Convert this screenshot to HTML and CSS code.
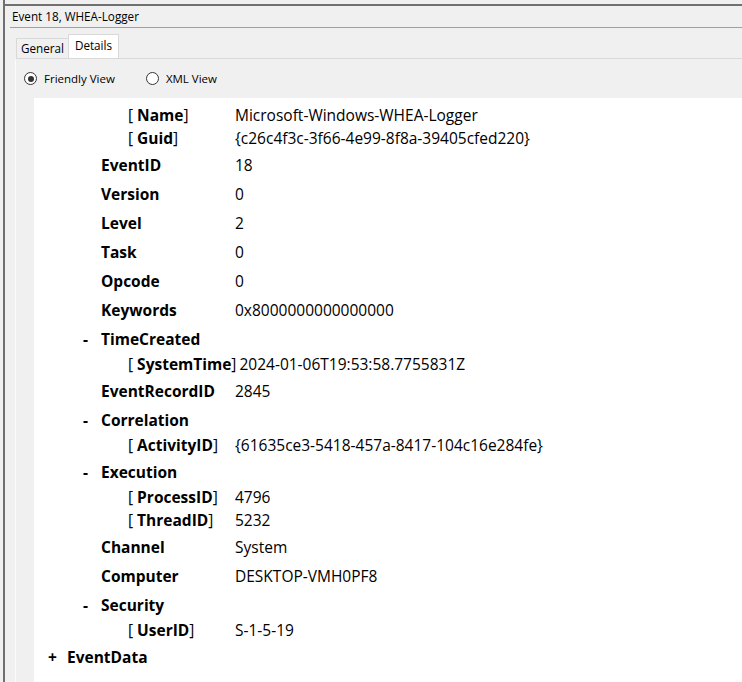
FILE: index.html
```html
<!DOCTYPE html>
<html lang="en">
<head>
    <meta charset="UTF-8">
    <title>Event 18, WHEA-Logger</title>
    <link rel="stylesheet" href="styles.css">
</head>
<body>
    <div class="window">
        <div class="frame">
            <div class="title">Event 18, WHEA-Logger</div>
            <div class="tabs">
                <div class="tab">General</div>
                <div class="tab active">Details</div>
            </div>
            <div class="panel">
                <div class="views">
                    <label class="radio"><span class="dot checked"></span>Friendly View</label>
                    <label class="radio"><span class="dot"></span>XML View</label>
                </div>
                <div class="details">
                    <div class="row sub"><span class="key">[ <b>Name</b>]</span><span class="val">Microsoft-Windows-WHEA-Logger</span></div>
                    <div class="row sub"><span class="key">[ <b>Guid</b>]</span><span class="val">{c26c4f3c-3f66-4e99-8f8a-39405cfed220}</span></div>
                    <div class="row main"><span class="tog"></span><b class="key">EventID</b><span class="val">18</span></div>
                    <div class="row main"><span class="tog"></span><b class="key">Version</b><span class="val">0</span></div>
                    <div class="row main"><span class="tog"></span><b class="key">Level</b><span class="val">2</span></div>
                    <div class="row main"><span class="tog"></span><b class="key">Task</b><span class="val">0</span></div>
                    <div class="row main"><span class="tog"></span><b class="key">Opcode</b><span class="val">0</span></div>
                    <div class="row main"><span class="tog"></span><b class="key">Keywords</b><span class="val">0x8000000000000000</span></div>
                    <div class="row main"><span class="tog">-</span><b class="key">TimeCreated</b></div>
                    <div class="row sub"><span class="key">[ <b>SystemTime</b>]</span><span class="val">2024-01-06T19:53:58.7755831Z</span></div>
                    <div class="row main"><span class="tog"></span><b class="key">EventRecordID</b><span class="val">2845</span></div>
                    <div class="row main"><span class="tog">-</span><b class="key">Correlation</b></div>
                    <div class="row sub"><span class="key">[ <b>ActivityID</b>]</span><span class="val">{61635ce3-5418-457a-8417-104c16e284fe}</span></div>
                    <div class="row main"><span class="tog">-</span><b class="key">Execution</b></div>
                    <div class="row sub"><span class="key">[ <b>ProcessID</b>]</span><span class="val">4796</span></div>
                    <div class="row sub"><span class="key">[ <b>ThreadID</b>]</span><span class="val">5232</span></div>
                    <div class="row main"><span class="tog"></span><b class="key">Channel</b><span class="val">System</span></div>
                    <div class="row main"><span class="tog"></span><b class="key">Computer</b><span class="val">DESKTOP-VMH0PF8</span></div>
                    <div class="row main"><span class="tog">-</span><b class="key">Security</b></div>
                    <div class="row sub"><span class="key">[ <b>UserID</b>]</span><span class="val">S-1-5-19</span></div>
                    <div class="row top"><span class="tog">+</span><b class="key">EventData</b></div>
                </div>
            </div>
        </div>
    </div>
</body>
</html>
```

FILE: styles.css
```css
html, body {
    margin: 0;
    height: 100%;
    overflow: hidden;
}

body {
    background: #f0f0f0;
    font-family: "Open Sans", "Noto Sans", sans-serif;
    color: #000;
}

.window {
    margin-left: 3px;
    height: 682px;
    border-left: 2px solid #707070;
    padding-top: 4px;
    box-sizing: border-box;
}

.frame {
    border-top: 2px solid #707070;
    height: 100%;
    display: flex;
    flex-direction: column;
}

.title {
    margin-left: 5px;
    padding-left: 2px;
    height: 21px;
    line-height: 20px;
    font-size: 11.7px;
    border-bottom: 1px solid #a0a0a0;
}

.tabs {
    display: flex;
    align-items: flex-end;
    height: 30px;
    margin-left: 11px;
}

.tab {
    width: 51px;
    height: 19px;
    line-height: 19px;
    font-size: 11.7px;
    text-align: center;
    border: 1px solid #d9d9d9;
    border-bottom: none;
    border-right: none;
    background: #f0f0f0;
}

.tab.active {
    height: 23px;
    line-height: 20px;
    width: 49px;
    background: #fff;
    border-right: 1px solid #d9d9d9;
}

.panel {
    flex: 1;
    margin-left: 10px;
    border-top: 1px solid #d9d9d9;
    border-left: 1px solid #fbfbfb;
    padding-left: 18px;
    display: flex;
    flex-direction: column;
    min-height: 0;
}

.views {
    display: flex;
    height: 39px;
    align-items: center;
    margin-left: -10px;
    font-size: 11.5px;
}

.radio {
    display: flex;
    align-items: center;
    margin-right: 31px;
}

.dot {
    width: 11px;
    height: 11px;
    border: 1px solid #333;
    border-radius: 50%;
    background: #fff;
    margin-right: 7px;
    position: relative;
}

.dot.checked::after {
    content: "";
    position: absolute;
    left: 2.5px;
    top: 2.5px;
    width: 6px;
    height: 6px;
    border-radius: 50%;
    background: #333;
}

.details {
    flex: 1;
    background: #fff;
    padding-top: 5px;
    font-size: 15.5px;
    overflow: hidden;
}

.row {
    display: flex;
    line-height: 20px;
    white-space: nowrap;
}

.row.main {
    padding: 6px 0 3px 49px;
}

.row.sub {
    padding: 2px 0 1px 94px;
}

.row.top {
    padding: 6px 0 3px 14px;
}

.tog {
    width: 18px;
    font-weight: bold;
}

.row.top .tog {
    width: 19px;
}

.row.main .key {
    min-width: 134px;
}

.row.sub .key {
    min-width: 104px;
    margin-right: 3px;
}
```
